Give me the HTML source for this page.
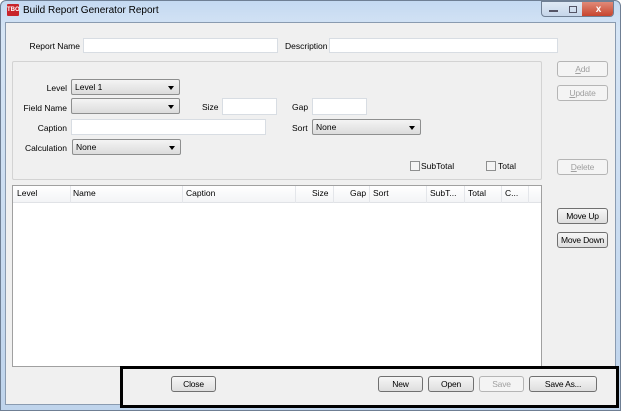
<!DOCTYPE html>
<html><head><style>
*{box-sizing:border-box}
body{margin:0;width:624px;height:411px;overflow:hidden;background:#fff;font-family:"Liberation Sans",sans-serif;font-size:8.5px;color:#000;position:relative}
.a{position:absolute}
.frame{left:0;top:0;width:621px;height:411px;background:linear-gradient(180deg,#c4d9f1,#d6e5f5 30px,#bfd4ec);border:1px solid #6f7f94;border-radius:6px 6px 0 0}
.inner{left:5px;top:22px;width:611px;height:383px;background:#f0f0f0;border:1px solid #8a9bb0}
.in{background:#fff;border:1px solid #d8dde3;height:15px}
.sel{background:linear-gradient(#f4f4f4,#dcdcdc);border:1px solid #8e8f8f;border-radius:2px;height:16px;padding:2px 3px;font-size:8.5px}
.sel:after{content:"";position:absolute;right:5px;top:6px;border:3px solid transparent;border-top:4px solid #000}
.btn{background:linear-gradient(#f6f6f6,#dedede);border:1px solid #707070;border-radius:3px;height:16px;text-align:center;line-height:14px;font-size:8.5px;letter-spacing:-0.2px;white-space:nowrap}
.dis{border-color:#b5b5b5;color:#a0a0a0;background:#f4f4f4}
.lbl{text-align:right}
.cb{width:10px;height:10px;border:1px solid #8e8f8f;background:#f4f4f4}
.hd{top:188px}
</style></head><body>
<div class="a frame"></div>
<div class="a" style="left:7px;top:4px;width:12px;height:12px;background:#c8242b;color:#fff;font-size:6px;font-weight:bold;line-height:12px;text-align:center;border-radius:1px">TBO</div>
<div class="a" style="left:23px;top:5px;font-size:10px">Build Report Generator Report</div>
<div class="a" style="left:541px;top:1px;width:73px;height:16px;border:1px solid #6f7f94;border-radius:0 0 4px 4px;background:linear-gradient(#dfe9f5,#c6d6ea);overflow:hidden">
 <div class="a" style="left:7px;top:8px;width:9px;height:2px;background:#556;"></div>
 <div class="a" style="left:27px;top:4px;width:8px;height:7px;border:1px solid #556"></div>
 <div class="a" style="left:40px;top:0;width:33px;height:16px;background:linear-gradient(#e08a78,#c43b24);color:#fff;font-weight:bold;font-size:10px;text-align:center;line-height:15px">x</div>
</div>
<div class="a inner"></div>

<div class="a lbl" style="left:20px;top:41px;width:60px">Report Name</div>
<div class="a in" style="left:83px;top:38px;width:195px"></div>
<div class="a" style="left:285px;top:41px">Description</div>
<div class="a in" style="left:329px;top:38px;width:229px"></div>

<div class="a" style="left:12px;top:61px;width:530px;height:119px;border:1px solid #d3d3d3;border-radius:2px"></div>
<div class="a lbl" style="left:10px;top:83px;width:57px">Level</div>
<div class="a sel" style="left:71px;top:79px;width:109px">Level 1</div>
<div class="a lbl" style="left:10px;top:103px;width:57px">Field Name</div>
<div class="a sel" style="left:71px;top:98px;width:109px"></div>
<div class="a" style="left:202px;top:102px">Size</div>
<div class="a in" style="left:222px;top:98px;width:55px;height:17px"></div>
<div class="a" style="left:292px;top:102px">Gap</div>
<div class="a in" style="left:312px;top:98px;width:55px;height:17px"></div>
<div class="a lbl" style="left:10px;top:123px;width:57px">Caption</div>
<div class="a in" style="left:71px;top:119px;width:195px;height:16px"></div>
<div class="a" style="left:292px;top:123px">Sort</div>
<div class="a sel" style="left:312px;top:119px;width:109px">None</div>
<div class="a lbl" style="left:10px;top:143px;width:57px">Calculation</div>
<div class="a sel" style="left:72px;top:139px;width:109px">None</div>
<div class="a cb" style="left:410px;top:161px"></div><div class="a" style="left:421px;top:161px">SubTotal</div>
<div class="a cb" style="left:486px;top:161px"></div><div class="a" style="left:498px;top:161px">Total</div>

<div class="a btn dis" style="left:557px;top:61px;width:51px"><u>A</u>dd</div>
<div class="a btn dis" style="left:557px;top:85px;width:51px"><u>U</u>pdate</div>
<div class="a btn dis" style="left:557px;top:159px;width:51px"><u>D</u>elete</div>
<div class="a btn" style="left:557px;top:208px;width:51px">Move Up</div>
<div class="a btn" style="left:557px;top:232px;width:51px">Move Down</div>

<div class="a" style="left:12px;top:185px;width:530px;height:182px;background:#fff;border:1px solid #a0a0a0"></div>
<div class="a" style="left:13px;top:186px;width:528px;height:17px;background:linear-gradient(#fff,#f3f4f6);border-bottom:1px solid #e0e2e6"></div>
<div class="a" style="left:70px;top:186px;width:1px;height:17px;background:#e4e6ea"></div>
<div class="a" style="left:182px;top:186px;width:1px;height:17px;background:#e4e6ea"></div>
<div class="a" style="left:295px;top:186px;width:1px;height:17px;background:#e4e6ea"></div>
<div class="a" style="left:333px;top:186px;width:1px;height:17px;background:#e4e6ea"></div>
<div class="a" style="left:369px;top:186px;width:1px;height:17px;background:#e4e6ea"></div>
<div class="a" style="left:426px;top:186px;width:1px;height:17px;background:#e4e6ea"></div>
<div class="a" style="left:464px;top:186px;width:1px;height:17px;background:#e4e6ea"></div>
<div class="a" style="left:501px;top:186px;width:1px;height:17px;background:#e4e6ea"></div>
<div class="a" style="left:528px;top:186px;width:1px;height:17px;background:#e4e6ea"></div>
<div class="a hd" style="left:17px">Level</div>
<div class="a hd" style="left:73px">Name</div>
<div class="a hd" style="left:186px">Caption</div>
<div class="a hd" style="left:312px">Size</div>
<div class="a hd" style="left:350px">Gap</div>
<div class="a hd" style="left:373px">Sort</div>
<div class="a hd" style="left:430px">SubT...</div>
<div class="a hd" style="left:468px">Total</div>
<div class="a hd" style="left:505px">C...</div>

<div class="a" style="left:120px;top:366px;width:499px;height:42px;border:3px solid #000;background:#f0f0f0"></div>
<div class="a btn" style="left:171px;top:376px;width:45px">Close</div>
<div class="a btn" style="left:378px;top:376px;width:45px">New</div>
<div class="a btn" style="left:428px;top:376px;width:46px">Open</div>
<div class="a btn dis" style="left:479px;top:376px;width:45px">Save</div>
<div class="a btn" style="left:529px;top:376px;width:68px">Save As...</div>
</body></html>
